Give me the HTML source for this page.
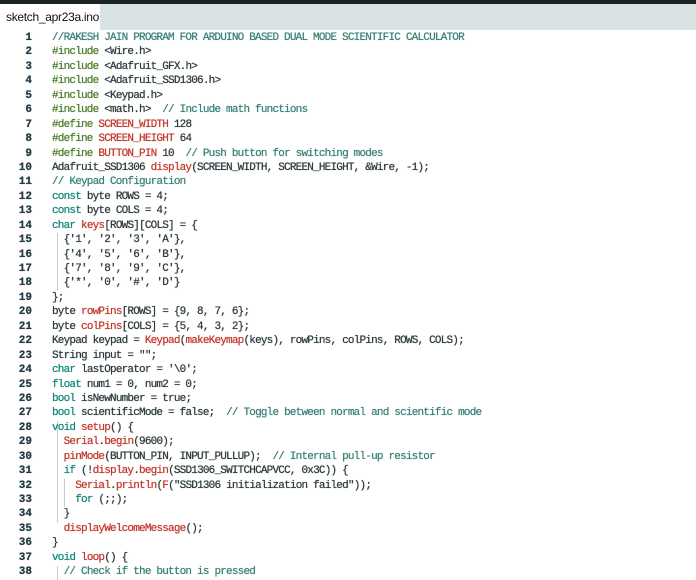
<!DOCTYPE html><html><head><meta charset="utf-8"><style>
body{margin:0;width:696px;height:580px;overflow:hidden;background:#fff;font-family:"Liberation Sans",sans-serif;position:relative}
#top{position:absolute;left:0;top:0;width:696px;height:4px;background:#1b2422}
#tabs{position:absolute;left:0;top:4px;width:696px;height:26px;background:#d9e3e4}
#tab{position:absolute;left:0;top:0;width:100px;height:26px;background:#fff;font-size:12px;color:#111;line-height:26px;padding-left:6px;box-sizing:border-box;letter-spacing:-0.3px}
#code{position:absolute;left:0;top:31px;width:696px;font-family:"Liberation Mono",monospace;font-size:11px;letter-spacing:-0.8px;line-height:14.45px;color:#2e3a3e;text-shadow:0 0 0.6px #2e3a3e}
.l{position:relative;height:14.45px}
.n{position:absolute;left:0;width:32px;text-align:right;font-weight:bold;color:#1f3a44;letter-spacing:0}
.c{position:absolute;left:52px;white-space:pre}
.k{color:#11877a;text-shadow:0 0 .6px #11877a}.i{color:#4a7d2a;text-shadow:0 0 .6px #4a7d2a}.m{color:#3a8178;text-shadow:0 0 .6px #3a8178}.f{color:#c1392d;text-shadow:0 0 .6px #c1392d}
.g{position:absolute;width:1px;background:#c8cfd0}
</style></head><body>
<div id="top"></div><div id="tabs"><div id="tab">sketch_apr23a.ino</div></div>
<div class="g" style="left:57px;top:233px;height:58px"></div>
<div class="g" style="left:57px;top:421px;height:102px"></div>
<div class="g" style="left:64px;top:479px;height:28px"></div>
<div class="g" style="left:57px;top:566px;height:14px"></div>
<div id="code"><div class="l"><span class="n">1</span><span class="c"><span class="m">//RAKESH JAIN PROGRAM FOR ARDUINO BASED DUAL MODE SCIENTIFIC CALCULATOR</span></span></div><div class="l"><span class="n">2</span><span class="c"><span class="i">#include</span> &lt;Wire.h&gt;</span></div><div class="l"><span class="n">3</span><span class="c"><span class="i">#include</span> &lt;Adafruit_GFX.h&gt;</span></div><div class="l"><span class="n">4</span><span class="c"><span class="i">#include</span> &lt;Adafruit_SSD1306.h&gt;</span></div><div class="l"><span class="n">5</span><span class="c"><span class="i">#include</span> &lt;Keypad.h&gt;</span></div><div class="l"><span class="n">6</span><span class="c"><span class="i">#include</span> &lt;math.h&gt;  <span class="m">// Include math functions</span></span></div><div class="l"><span class="n">7</span><span class="c"><span class="i">#define</span> <span class="f">SCREEN_WIDTH</span> 128</span></div><div class="l"><span class="n">8</span><span class="c"><span class="i">#define</span> <span class="f">SCREEN_HEIGHT</span> 64</span></div><div class="l"><span class="n">9</span><span class="c"><span class="i">#define</span> <span class="f">BUTTON_PIN</span> 10  <span class="m">// Push button for switching modes</span></span></div><div class="l"><span class="n">10</span><span class="c">Adafruit_SSD1306 <span class="f">display</span>(SCREEN_WIDTH, SCREEN_HEIGHT, &amp;Wire, -1);</span></div><div class="l"><span class="n">11</span><span class="c"><span class="m">// Keypad Configuration</span></span></div><div class="l"><span class="n">12</span><span class="c"><span class="k">const</span> byte ROWS = 4;</span></div><div class="l"><span class="n">13</span><span class="c"><span class="k">const</span> byte COLS = 4;</span></div><div class="l"><span class="n">14</span><span class="c"><span class="k">char</span> <span class="f">keys</span>[ROWS][COLS] = {</span></div><div class="l"><span class="n">15</span><span class="c">  {'1', '2', '3', 'A'},</span></div><div class="l"><span class="n">16</span><span class="c">  {'4', '5', '6', 'B'},</span></div><div class="l"><span class="n">17</span><span class="c">  {'7', '8', '9', 'C'},</span></div><div class="l"><span class="n">18</span><span class="c">  {'*', '0', '#', 'D'}</span></div><div class="l"><span class="n">19</span><span class="c">};</span></div><div class="l"><span class="n">20</span><span class="c">byte <span class="f">rowPins</span>[ROWS] = {9, 8, 7, 6};</span></div><div class="l"><span class="n">21</span><span class="c">byte <span class="f">colPins</span>[COLS] = {5, 4, 3, 2};</span></div><div class="l"><span class="n">22</span><span class="c">Keypad keypad = <span class="f">Keypad</span>(<span class="f">makeKeymap</span>(keys), rowPins, colPins, ROWS, COLS);</span></div><div class="l"><span class="n">23</span><span class="c">String input = "";</span></div><div class="l"><span class="n">24</span><span class="c"><span class="k">char</span> lastOperator = '\0';</span></div><div class="l"><span class="n">25</span><span class="c"><span class="k">float</span> num1 = 0, num2 = 0;</span></div><div class="l"><span class="n">26</span><span class="c"><span class="k">bool</span> isNewNumber = true;</span></div><div class="l"><span class="n">27</span><span class="c"><span class="k">bool</span> scientificMode = false;  <span class="m">// Toggle between normal and scientific mode</span></span></div><div class="l"><span class="n">28</span><span class="c"><span class="k">void</span> <span class="f">setup</span>() {</span></div><div class="l"><span class="n">29</span><span class="c">  <span class="f">Serial</span>.<span class="f">begin</span>(9600);</span></div><div class="l"><span class="n">30</span><span class="c">  <span class="f">pinMode</span>(BUTTON_PIN, INPUT_PULLUP);  <span class="m">// Internal pull-up resistor</span></span></div><div class="l"><span class="n">31</span><span class="c">  <span class="k">if</span> (!<span class="f">display</span>.<span class="f">begin</span>(SSD1306_SWITCHCAPVCC, 0x3C)) {</span></div><div class="l"><span class="n">32</span><span class="c">    <span class="f">Serial</span>.<span class="f">println</span>(<span class="f">F</span>("SSD1306 initialization failed"));</span></div><div class="l"><span class="n">33</span><span class="c">    <span class="k">for</span> (;;);</span></div><div class="l"><span class="n">34</span><span class="c">  }</span></div><div class="l"><span class="n">35</span><span class="c">  <span class="f">displayWelcomeMessage</span>();</span></div><div class="l"><span class="n">36</span><span class="c">}</span></div><div class="l"><span class="n">37</span><span class="c"><span class="k">void</span> <span class="f">loop</span>() {</span></div><div class="l"><span class="n">38</span><span class="c">  <span class="m">// Check if the button is pressed</span></span></div></div>
</body></html>
